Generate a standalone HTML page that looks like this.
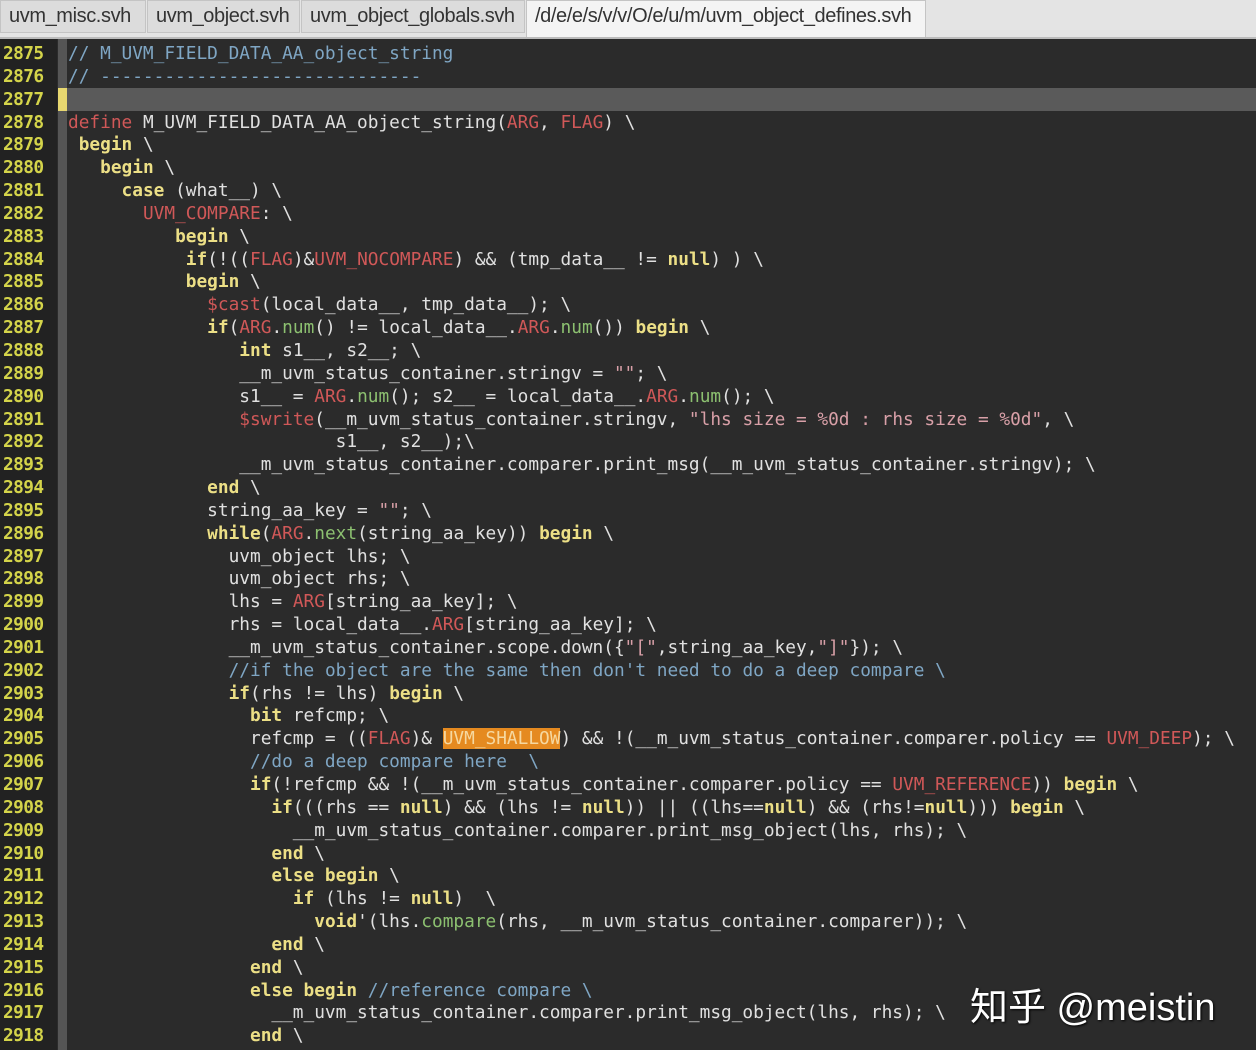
<!DOCTYPE html>
<html><head><meta charset="utf-8"><style>
html,body{margin:0;padding:0;width:1256px;height:1050px;overflow:hidden;background:#2b2b2b}
.tabs{position:absolute;left:0;top:0;width:1256px;height:37px;background:#e4e4e4;border-bottom:2px solid #bbb}
.tab{position:absolute;top:0;height:33px;background:#dcdcdc;border:1px solid #c4c4c4;font:20px "Liberation Sans",sans-serif;color:#333;line-height:31px;padding-left:8px;box-sizing:border-box;letter-spacing:-0.4px}
.tab.act{background:#f4f4f4;height:37px;border-bottom:none}
.ln{position:absolute;left:0;top:39px;width:57px;height:1011px;background:#222}
.gut{position:absolute;left:58px;top:39px;width:9px;height:1011px;background:#555}
.hl{position:absolute;left:58px;width:1198px;height:23px;background:#5a5a5a}
.mk{position:absolute;left:58px;width:9px;height:23px;background:#e8d870}
pre{position:absolute;margin:0;font:17.8px "DejaVu Sans Mono",monospace;line-height:22.84px;white-space:pre}
#nums{left:3px;top:43px;color:#d4d44a;font-weight:bold;letter-spacing:-0.6px}
#code{left:68px;top:43px;color:#e0e0e0}
.k{color:#ecdf86;font-weight:bold}.c{color:#7fa6c4}.r{color:#d05858}.g{color:#8cc070}.s{color:#d9a0a8}
.sh{background:#e58a20;color:#f6d8a0}
.wm{position:absolute;left:970px;top:976px;font:38px "Liberation Sans","Noto Sans CJK SC",sans-serif;color:#fff;text-shadow:1px 1px 2px #000}
</style></head><body>
<div class="tabs">
<div class="tab" style="left:0;width:146px">uvm_misc.svh</div>
<div class="tab" style="left:147px;width:153px">uvm_object.svh</div>
<div class="tab" style="left:301px;width:224px">uvm_object_globals.svh</div>
<div class="tab act" style="left:526px;width:400px">/d/e/e/s/v/v/O/e/u/m/uvm_object_defines.svh</div>
</div>
<div class="ln"></div><div class="gut"></div>
<div class="hl" style="top:87.7px"></div><div class="mk" style="top:87.7px"></div>
<pre id="nums">2875
2876
2877
2878
2879
2880
2881
2882
2883
2884
2885
2886
2887
2888
2889
2890
2891
2892
2893
2894
2895
2896
2897
2898
2899
2900
2901
2902
2903
2904
2905
2906
2907
2908
2909
2910
2911
2912
2913
2914
2915
2916
2917
2918</pre>
<pre id="code"><span class="c">// M_UVM_FIELD_DATA_AA_object_string</span>
<span class="c">// ------------------------------</span>

<span class="r">define</span> M_UVM_FIELD_DATA_AA_object_string(<span class="r">ARG</span>, <span class="r">FLAG</span>) \
 <span class="k">begin</span> \
   <span class="k">begin</span> \
     <span class="k">case</span> (what__) \
       <span class="r">UVM_COMPARE</span>: \
          <span class="k">begin</span> \
           <span class="k">if</span>(!((<span class="r">FLAG</span>)&amp;<span class="r">UVM_NOCOMPARE</span>) &amp;&amp; (tmp_data__ != <span class="k">null</span>) ) \
           <span class="k">begin</span> \
             <span class="r">$cast</span>(local_data__, tmp_data__); \
             <span class="k">if</span>(<span class="r">ARG</span>.<span class="g">num</span>() != local_data__.<span class="r">ARG</span>.<span class="g">num</span>()) <span class="k">begin</span> \
                <span class="k">int</span> s1__, s2__; \
                __m_uvm_status_container.stringv = <span class="s">""</span>; \
                s1__ = <span class="r">ARG</span>.<span class="g">num</span>(); s2__ = local_data__.<span class="r">ARG</span>.<span class="g">num</span>(); \
                <span class="r">$swrite</span>(__m_uvm_status_container.stringv, <span class="s">"lhs size = %0d : rhs size = %0d"</span>, \
                         s1__, s2__);\
                __m_uvm_status_container.comparer.print_msg(__m_uvm_status_container.stringv); \
             <span class="k">end</span> \
             string_aa_key = <span class="s">""</span>; \
             <span class="k">while</span>(<span class="r">ARG</span>.<span class="g">next</span>(string_aa_key)) <span class="k">begin</span> \
               uvm_object lhs; \
               uvm_object rhs; \
               lhs = <span class="r">ARG</span>[string_aa_key]; \
               rhs = local_data__.<span class="r">ARG</span>[string_aa_key]; \
               __m_uvm_status_container.scope.down({<span class="s">"["</span>,string_aa_key,<span class="s">"]"</span>}); \
               <span class="c">//if the object are the same then don't need to do a deep compare \</span>
               <span class="k">if</span>(rhs != lhs) <span class="k">begin</span> \
                 <span class="k">bit</span> refcmp; \
                 refcmp = ((<span class="r">FLAG</span>)&amp; <span class="sh">UVM_SHALLOW</span>) &amp;&amp; !(__m_uvm_status_container.comparer.policy == <span class="r">UVM_DEEP</span>); \
                 <span class="c">//do a deep compare here  \</span>
                 <span class="k">if</span>(!refcmp &amp;&amp; !(__m_uvm_status_container.comparer.policy == <span class="r">UVM_REFERENCE</span>)) <span class="k">begin</span> \
                   <span class="k">if</span>(((rhs == <span class="k">null</span>) &amp;&amp; (lhs != <span class="k">null</span>)) || ((lhs==<span class="k">null</span>) &amp;&amp; (rhs!=<span class="k">null</span>))) <span class="k">begin</span> \
                     __m_uvm_status_container.comparer.print_msg_object(lhs, rhs); \
                   <span class="k">end</span> \
                   <span class="k">else begin</span> \
                     <span class="k">if</span> (lhs != <span class="k">null</span>)  \
                       <span class="k">void</span>'(lhs.<span class="g">compare</span>(rhs, __m_uvm_status_container.comparer)); \
                   <span class="k">end</span> \
                 <span class="k">end</span> \
                 <span class="k">else begin</span> <span class="c">//reference compare \</span>
                   __m_uvm_status_container.comparer.print_msg_object(lhs, rhs); \
                 <span class="k">end</span> \</pre>
<div class="wm">知乎 @meistin</div>
</body></html>
